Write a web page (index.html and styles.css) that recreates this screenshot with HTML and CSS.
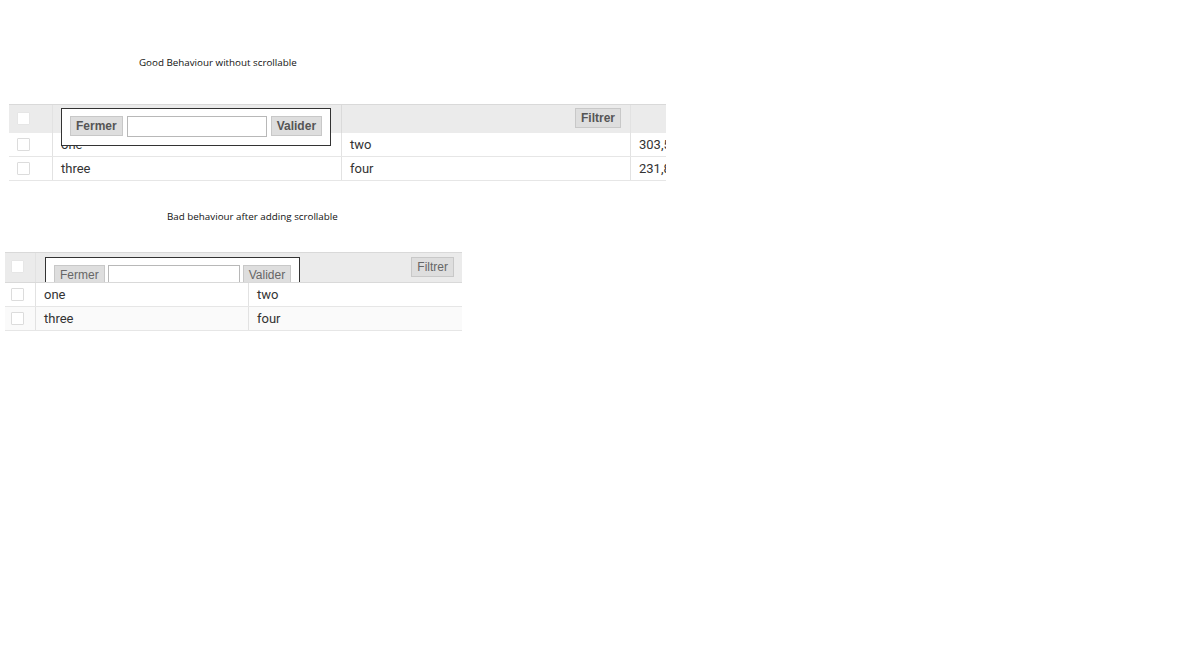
FILE: index.html
```html
<!DOCTYPE html>
<html lang="fr">
<head>
    <meta charset="UTF-8">
    <title>Filtre - scrollable</title>
    <link rel="stylesheet" href="styles.css">
</head>
<body>
<p class="caption caption-good">Good Behaviour without scrollable</p>
<div class="grid grid-good">
    <div class="row head">
        <div class="cell check"><span class="box"></span></div>
        <div class="cell col1"></div>
        <div class="cell col2 filter-cell"><button class="btn bold">Filtrer</button></div>
        <div class="cell col3"></div>
        <div class="popup">
            <button class="btn bold">Fermer</button>
            <input type="text" class="field">
            <button class="btn bold">Valider</button>
        </div>
    </div>
    <div class="row">
        <div class="cell check"><span class="box"></span></div>
        <div class="cell col1">one</div>
        <div class="cell col2">two</div>
        <div class="cell col3">303,55</div>
    </div>
    <div class="row">
        <div class="cell check"><span class="box"></span></div>
        <div class="cell col1">three</div>
        <div class="cell col2">four</div>
        <div class="cell col3">231,80</div>
    </div>
</div>

<p class="caption caption-bad">Bad behaviour after adding scrollable</p>
<div class="grid grid-bad">
    <div class="row head">
        <div class="cell check"><span class="box"></span></div>
        <div class="cell wide filter-cell"><button class="btn">Filtrer</button></div>
        <div class="popup">
            <button class="btn">Fermer</button>
            <input type="text" class="field">
            <button class="btn">Valider</button>
        </div>
    </div>
    <div class="row">
        <div class="cell check"><span class="box"></span></div>
        <div class="cell col1">one</div>
        <div class="cell col2">two</div>
    </div>
    <div class="row alt">
        <div class="cell check"><span class="box"></span></div>
        <div class="cell col1">three</div>
        <div class="cell col2">four</div>
    </div>
</div>
</body>
</html>
```

FILE: styles.css
```css
body {
    margin: 0;
    font-family: Roboto, 'Liberation Sans', sans-serif;
    color: #333;
    background: #fff;
}

.caption {
    font-family: 'Open Sans', 'Noto Sans', sans-serif;
    font-size: 9.8px;
    line-height: 14px;
    margin: 0;
    color: #111;
}

.caption-good {
    margin: 56px 0 0 139px;
}

.caption-bad {
    margin: 29px 0 0 167px;
}

.grid {
    overflow: hidden;
    font-size: 13px;
}

.grid-good {
    margin: 34px 0 0 9px;
    width: 657px;
}

.grid-bad {
    margin: 28px 0 0 5px;
    width: 457px;
}

.row {
    display: flex;
    height: 23px;
    border-bottom: 1px solid #e6e6e6;
    background: #fff;
}

.row.alt {
    background: #fafafa;
}

.row.head {
    position: relative;
    height: 28px;
    border-top: 1px solid #d9d9d9;
    border-bottom: none;
    background: #ebebeb;
}

.grid-bad .row.head {
    height: 29px;
    border-bottom: 1px solid #d9d9d9;
    overflow: hidden;
}

.cell {
    flex: none;
    display: flex;
    align-items: center;
    padding: 0 8px;
    box-sizing: border-box;
    border-right: 1px solid #e2e2e2;
    white-space: nowrap;
}

.check {
    width: 44px;
    padding: 0 8px;
}

.grid-bad .check {
    width: 31px;
    padding: 0 6px;
}

.box {
    width: 11px;
    height: 11px;
    border: 1px solid #dcdcdc;
    background: #fff;
    border-radius: 1px;
}

.head .box {
    border-color: #e6e6e6;
}

.grid-good .col1,
.grid-good .col2 {
    width: 289px;
}

.grid-good .col3 {
    width: 120px;
    border-right: none;
}

.grid-bad .col1 {
    width: 213px;
}

.grid-bad .col2 {
    width: 213px;
    border-right: none;
}

.grid-bad .wide {
    width: 426px;
    border-right: none;
}

.head .cell {
    align-items: flex-start;
    padding-top: 7px;
}

.grid-good .head .col1 {
    border-right: 1px solid #dadada;
}

.filter-cell {
    justify-content: flex-end;
}

.grid-good .filter-cell {
    padding: 3px 9px 0 0;
}

.grid-bad .filter-cell {
    padding: 4px 8px 0 0;
}

.btn {
    font-family: 'Liberation Sans', Arial, sans-serif;
    font-size: 12px;
    line-height: 14px;
    color: #666;
    background: #dedede;
    border: 1px solid #c8c8c8;
    padding: 2px 5px 2px;
    margin: 0;
    border-radius: 0;
}

.btn.bold {
    font-weight: bold;
    color: #555;
}

.field {
    height: 21px;
    box-sizing: border-box;
    border: 1px solid #b8b8b8;
    background: #fff;
    margin: 0;
    padding: 0;
}

.popup {
    position: absolute;
    display: flex;
    align-items: flex-start;
    gap: 4px;
    background: #fff;
    border: 1px solid #333;
    box-sizing: border-box;
}

.grid-good .popup {
    left: 52px;
    top: 3px;
    width: 270px;
    height: 38px;
    padding: 7px 8px;
}

.grid-good .field {
    width: 140px;
}

.grid-bad .popup {
    left: 40px;
    top: 4px;
    width: 255px;
    height: 40px;
    padding: 7px 8px;
    gap: 3px;
}

.grid-bad .popup .btn {
    padding: 1px 5px 1px;
    line-height: 16px;
}

.grid-bad .field {
    width: 132px;
}
```
